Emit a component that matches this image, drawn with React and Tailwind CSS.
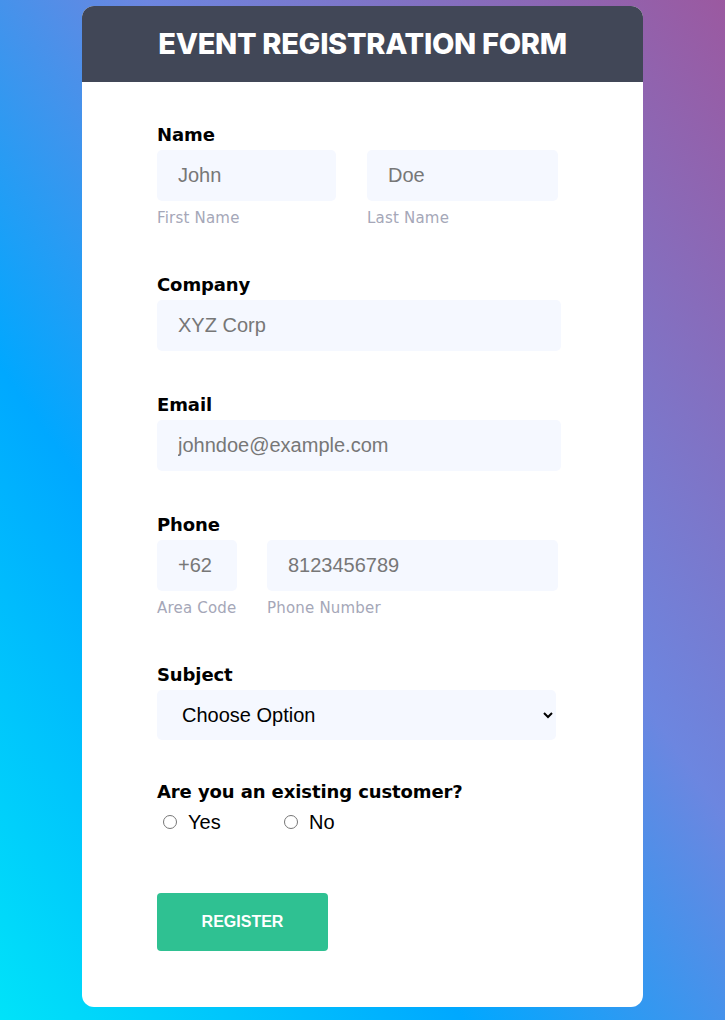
import { useState } from "react";

const labelFont = { fontFamily: "'DejaVu Sans', 'Noto Sans', sans-serif" };
const titleFont = { fontFamily: "Inter, 'Noto Sans', sans-serif" };

function Label({ children }) {
  return (
    <div
      className="text-[18px] leading-[24px] font-bold text-black mb-[3px] tracking-[-0.1px]"
      style={labelFont}
    >
      {children}
    </div>
  );
}

function SubLabel({ children }) {
  return (
    <div
      className="mt-[7px] text-[15px] leading-[20px] font-normal text-[#a5a7b8] tracking-[0.2px]"
      style={labelFont}
    >
      {children}
    </div>
  );
}

function Field({ placeholder, className = "" }) {
  return (
    <input
      type="text"
      placeholder={placeholder}
      className={`h-[51px] rounded-[5px] bg-[#f5f8ff] pl-[21px] pr-3 text-[20px] text-[#666] placeholder:text-[#777] outline-none font-['Liberation_Sans',Arial,sans-serif] ${className}`}
    />
  );
}

export default function App() {
  const [customer, setCustomer] = useState("");

  return (
    <div className="min-h-screen w-full bg-[linear-gradient(to_top_right,#00e3f9_0%,#00a8ff_32%,#6c86e0_60%,#9b59a0_100%)] pt-[6px] pb-[14px]">
      <div className="ml-[82px] w-[561px] rounded-[12px] bg-white overflow-hidden">
        {/* header */}
        <div className="h-[76px] bg-[#414757] flex items-center justify-center">
          <h1
            className="text-[29px] font-extrabold text-white tracking-[-0.3px]"
            style={titleFont}
          >
            EVENT REGISTRATION FORM
          </h1>
        </div>

        {/* form body */}
        <form
          className="pl-[75px] pr-[82px] pt-[41px] pb-[56px]"
          onSubmit={(e) => e.preventDefault()}
        >
          {/* Name */}
          <div className="mb-[45px]">
            <Label>Name</Label>
            <div className="flex gap-[31px]">
              <div>
                <Field placeholder="John" className="w-[179px]" />
                <SubLabel>First Name</SubLabel>
              </div>
              <div>
                <Field placeholder="Doe" className="w-[191px]" />
                <SubLabel>Last Name</SubLabel>
              </div>
            </div>
          </div>

          {/* Company */}
          <div className="mb-[42px]">
            <Label>Company</Label>
            <Field placeholder="XYZ Corp" className="w-[404px]" />
          </div>

          {/* Email */}
          <div className="mb-[42px]">
            <Label>Email</Label>
            <Field placeholder="johndoe@example.com" className="w-[404px]" />
          </div>

          {/* Phone */}
          <div className="mb-[45px]">
            <Label>Phone</Label>
            <div className="flex gap-[30px]">
              <div>
                <Field placeholder="+62" className="w-[80px]" />
                <SubLabel>Area Code</SubLabel>
              </div>
              <div>
                <Field placeholder="8123456789" className="w-[291px]" />
                <SubLabel>Phone Number</SubLabel>
              </div>
            </div>
          </div>

          {/* Subject */}
          <div className="mb-[40px]">
            <Label>Subject</Label>
            <select
              defaultValue=""
              className="h-[50px] w-[399px] rounded-[5px] bg-[#f5f8ff] pl-[21px] pr-[8px] text-[20px] text-black outline-none font-['Liberation_Sans',Arial,sans-serif]"
            >
              <option value="">Choose Option</option>
              <option value="a">Option 1</option>
              <option value="b">Option 2</option>
              <option value="c">Option 3</option>
            </select>
          </div>

          {/* Existing customer */}
          <div>
            <Label>Are you an existing customer?</Label>
            <div className="flex items-center mt-[6px] h-[24px] text-[20px] text-black font-['Liberation_Sans',Arial,sans-serif]">
              <label className="flex items-center w-[127px] pl-[6px]">
                <input
                  type="radio"
                  name="customer"
                  checked={customer === "yes"}
                  onChange={() => setCustomer("yes")}
                  className="w-[14px] h-[14px] m-0 mr-[11px]"
                />
                Yes
              </label>
              <label className="flex items-center">
                <input
                  type="radio"
                  name="customer"
                  checked={customer === "no"}
                  onChange={() => setCustomer("no")}
                  className="w-[14px] h-[14px] m-0 mr-[11px]"
                />
                No
              </label>
            </div>
          </div>

          <button
            type="submit"
            className="mt-[59px] h-[58px] w-[171px] rounded-[4px] bg-[#2fc192] text-white text-[16px] font-bold uppercase font-['Liberation_Sans',Arial,sans-serif]"
          >
            Register
          </button>
        </form>
      </div>
    </div>
  );
}
